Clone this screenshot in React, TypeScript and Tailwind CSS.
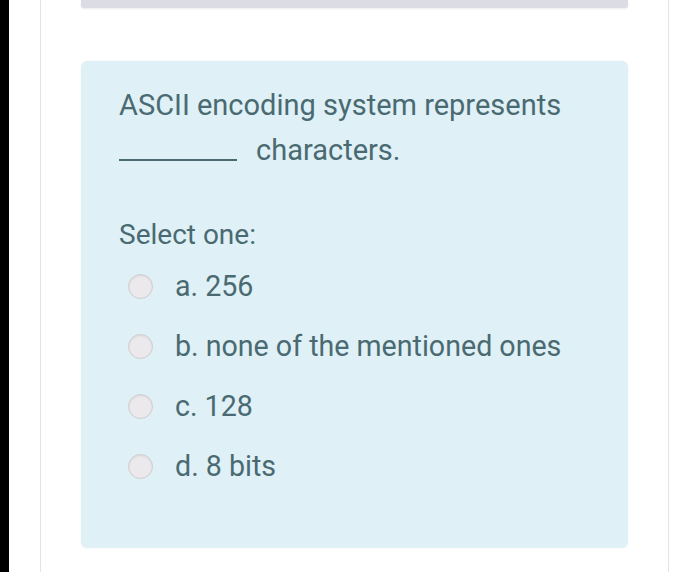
const options = [
  "a. 256",
  "b. none of the mentioned ones",
  "c. 128",
  "d. 8 bits",
];

function Radio() {
  return (
    <span className="block h-[25px] w-[25px] shrink-0 rounded-full border border-[#cfcdd0] bg-[#ebe9ec] shadow-[inset_0_1px_2px_rgba(0,0,0,0.08)]" />
  );
}

export default function App() {
  return (
    <div
      className="flex h-[572px] w-[700px] bg-white text-[#4a6a72]"
      style={{ fontFamily: "Roboto, 'Noto Sans', sans-serif" }}
    >
      <div className="h-full w-[9px] bg-black" />
      <div className="h-full w-[31px]" />
      <div className="flex h-full w-[629px] flex-col border-x border-[#e4e4e6] px-[40px]">
        <div className="h-[8px] rounded-b-[3px] bg-[#dcdce4] shadow-[0_1px_2px_rgba(0,0,0,0.08)]" />
        <div className="mt-[53px] h-[487px] rounded-[6px] bg-[#dff0f6] pl-[38px] pt-[22px] shadow-[0_0_3px_rgba(0,0,0,0.05)]">
          <p className="text-[29px] leading-[45px]">
            ASCII encoding system represents
            <br />
            <span className="mr-[19px] inline-block w-[118px] translate-y-[1px] border-b-2 border-[#4a6a72] align-baseline" />
            characters.
          </p>
          <p className="mt-[46px] text-[28px] leading-[32px]">Select one:</p>
          <div className="mt-[5px] flex flex-col">
            {options.map((o) => (
              <div key={o} className="flex h-[60px] items-center pl-[9px]">
                <Radio />
                <span className="ml-[22px] text-[28.6px]">{o}</span>
              </div>
            ))}
          </div>
        </div>
      </div>
    </div>
  );
}
